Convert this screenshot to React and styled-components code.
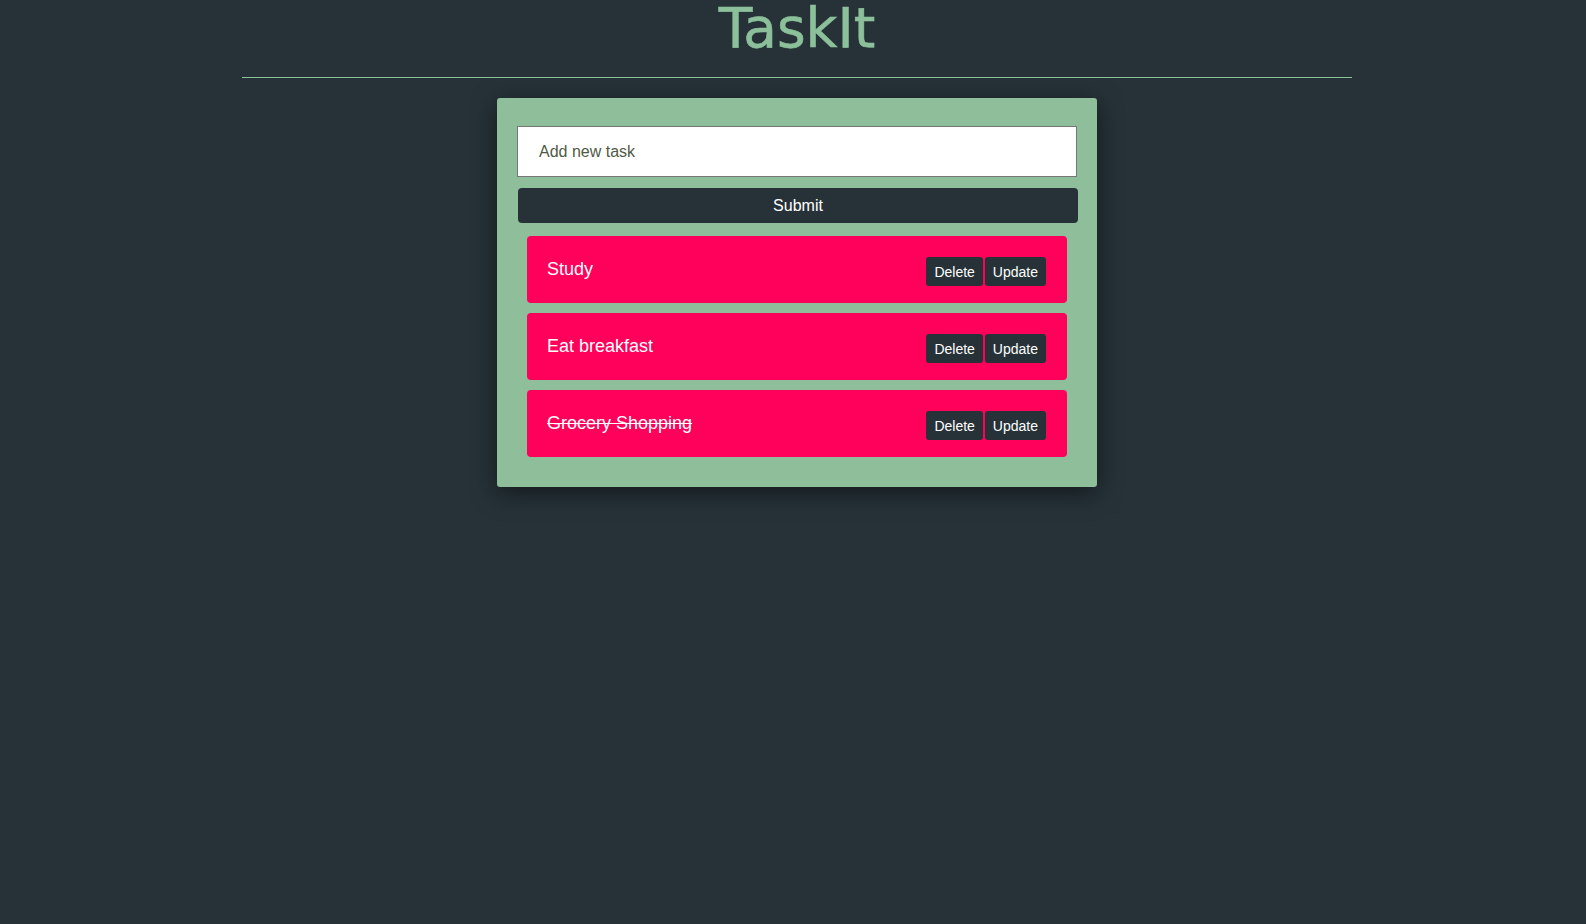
import React, { useState } from "react";
import styled, { createGlobalStyle } from "styled-components";

const GlobalStyle = createGlobalStyle`
  * { box-sizing: border-box; }
  html, body {
    margin: 0;
    background: #263238;
    min-height: 100%;
  }
  body {
    font-family: "Liberation Sans", Arial, sans-serif;
  }
`;

const Page = styled.div`
  min-height: 924px;
  padding-left: 8px;
  padding-top: 4px;
  background: #263238;
`;

const Title = styled.h1`
  margin: 0;
  text-align: center;
  font-family: "DejaVu Sans", "Noto Sans", sans-serif;
  font-weight: 400;
  font-size: 55px;
  line-height: 48px;
  color: #8bc09a;
  -webkit-text-stroke: 0.6px #8bc09a;
`;

const Rule = styled.hr`
  width: 70vw;
  margin: 25px auto 20px;
  border: none;
  border-top: 1px solid #8bc09a;
`;

const Card = styled.div`
  width: 600px;
  margin: 0 auto;
  padding: 28px 20px 30px;
  background: #8ebf9a;
  border-radius: 3px;
  box-shadow: 0 6px 24px rgba(0, 0, 0, 0.5);
`;

const Form = styled.form`
  display: flex;
  flex-direction: column;
  gap: 11px;
`;

const Input = styled.input`
  width: 100%;
  height: 51px;
  padding: 0 21px;
  border: 1px solid #767676;
  background: #fff;
  font-family: inherit;
  font-size: 16px;
  color: #263238;
  outline: none;
  &::placeholder {
    color: #4f5a45;
  }
`;

const SubmitButton = styled.button`
  width: 100%;
  height: 35px;
  margin-left: 1px;
  border: none;
  border-radius: 4px;
  background: #263238;
  color: #fff;
  font-family: inherit;
  font-size: 16px;
  cursor: pointer;
`;

const List = styled.div`
  display: flex;
  flex-direction: column;
  gap: 10px;
  margin-top: 13px;
  padding: 0 10px;
`;

const Row = styled.div`
  display: flex;
  justify-content: space-between;
  align-items: flex-start;
  height: 67px;
  padding: 21px 21px 0 20px;
  background: #ff005a;
  border-radius: 4px;
`;

const TaskText = styled.span`
  margin-top: 2px;
  font-size: 18px;
  color: #fff;
  text-decoration: ${(p) => (p.$done ? "line-through" : "none")};
  cursor: pointer;
`;

const Actions = styled.div`
  display: flex;
  gap: 2px;
`;

const SmallButton = styled.button`
  height: 29px;
  padding: 0 8px;
  border: none;
  border-radius: 3px;
  background: #263238;
  color: #fff;
  font-family: inherit;
  font-size: 14px;
  cursor: pointer;
`;

export default function App() {
  const [text, setText] = useState("");
  const [tasks, setTasks] = useState([
    { id: 1, title: "Study", done: false },
    { id: 2, title: "Eat breakfast", done: false },
    { id: 3, title: "Grocery Shopping", done: true },
  ]);

  const handleSubmit = (e) => {
    e.preventDefault();
    if (!text.trim()) return;
    setTasks([...tasks, { id: Date.now(), title: text, done: false }]);
    setText("");
  };

  const toggle = (id) =>
    setTasks(tasks.map((t) => (t.id === id ? { ...t, done: !t.done } : t)));

  const remove = (id) => setTasks(tasks.filter((t) => t.id !== id));

  return (
    <Page>
      <GlobalStyle />
      <Title>TaskIt</Title>
      <Rule />
      <Card>
        <Form onSubmit={handleSubmit}>
          <Input
            type="text"
            value={text}
            placeholder="Add new task"
            onChange={(e) => setText(e.target.value)}
          />
          <SubmitButton type="submit">Submit</SubmitButton>
        </Form>
        <List>
          {tasks.map((t) => (
            <Row key={t.id}>
              <TaskText $done={t.done} onClick={() => toggle(t.id)}>
                {t.title}
              </TaskText>
              <Actions>
                <SmallButton onClick={() => remove(t.id)}>Delete</SmallButton>
                <SmallButton>Update</SmallButton>
              </Actions>
            </Row>
          ))}
        </List>
      </Card>
    </Page>
  );
}
